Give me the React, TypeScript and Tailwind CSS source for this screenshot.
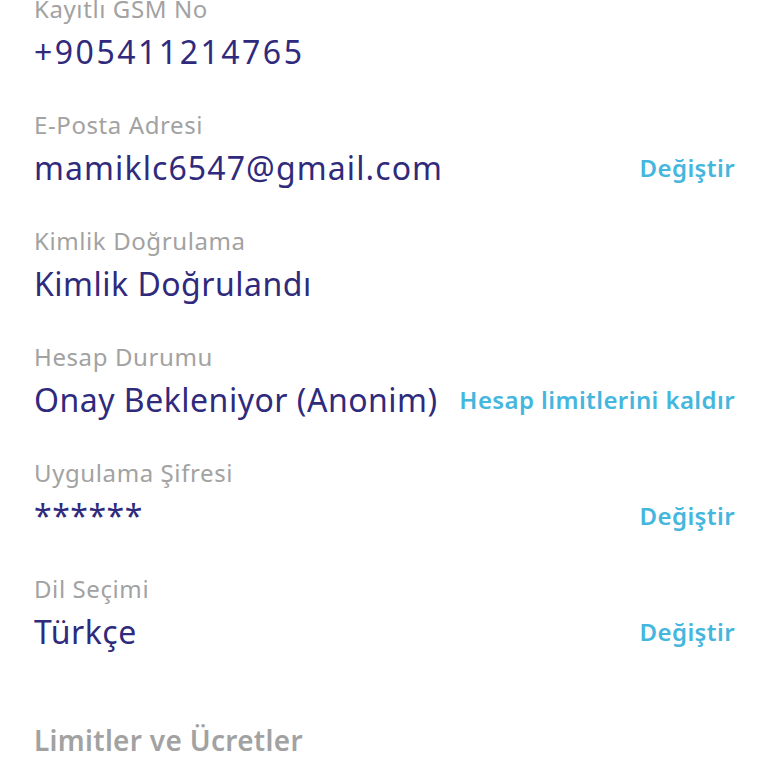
const rows = [
  { label: 'Kayıtlı GSM No', value: '+905411214765', track: 'tracking-[2.5px]' },
  { label: 'E-Posta Adresi', value: 'mamiklc6547@gmail.com', action: 'Değiştir', track: 'tracking-[1.1px]' },
  { label: 'Kimlik Doğrulama', value: 'Kimlik Doğrulandı' },
  { label: 'Hesap Durumu', value: 'Onay Bekleniyor (Anonim)', action: 'Hesap limitlerini kaldır' },
  { label: 'Uygulama Şifresi', value: '******', action: 'Değiştir' },
  { label: 'Dil Seçimi', value: 'Türkçe', action: 'Değiştir' },
];

export default function App() {
  return (
    <div className="w-[768px] h-[768px] overflow-hidden bg-white font-['Noto_Sans',sans-serif]">
      <div className="mt-[-7px] pl-[34px] pr-[33px]">
        {rows.map(row => (
          <div key={row.label} className="h-[116px]">
            <div className="text-[24px] leading-[32px] tracking-[0.6px] text-[#a2a2a2]">{row.label}</div>
            <div className="mt-[5px] flex items-center justify-between h-[44px]">
              <span className={`text-[32px] leading-[44px] text-[#2f2a7c] ${row.track ?? 'tracking-[0.5px]'}`}>
                {row.value}
              </span>
              {row.action && (
                <span className="text-[24px] leading-[32px] tracking-[0.4px] font-semibold text-[#45b6de]">
                  {row.action}
                </span>
              )}
            </div>
          </div>
        ))}
        <div className="pt-[33px] text-[28px] leading-[36px] tracking-[0.3px] font-semibold text-[#a2a2a2]">
          Limitler ve Ücretler
        </div>
      </div>
    </div>
  );
}
